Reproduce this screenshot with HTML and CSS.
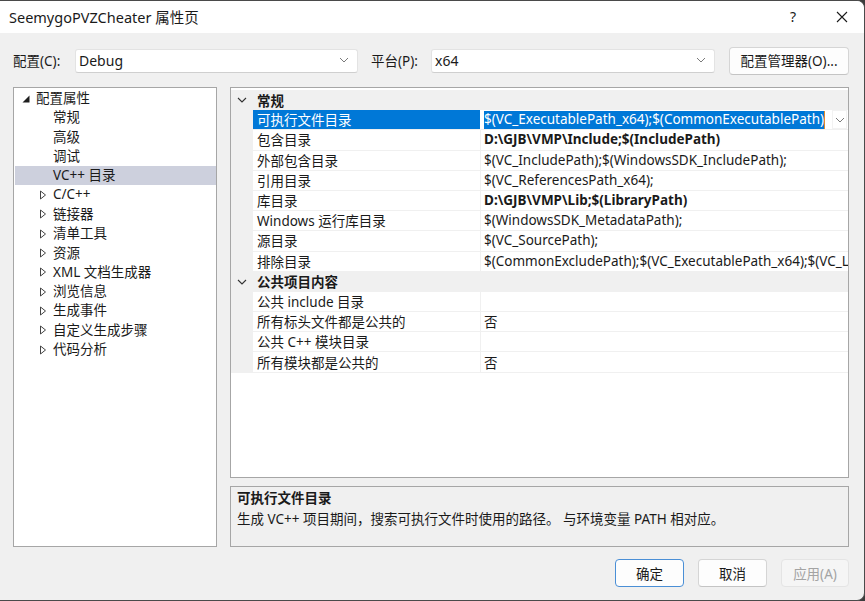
FILE: index.html
```html
<!DOCTYPE html>
<html lang="zh-CN">
<head>
<meta charset="utf-8">
<title>SeemygoPVZCheater 属性页</title>
<link rel="stylesheet" href="styles.css">
</head>
<body>
<div class="window">
  <div class="titlebar">
    <span class="title">SeemygoPVZCheater 属性页</span>
    <span class="help">?</span>
    <span class="close"><svg width="12" height="12" viewBox="0 0 12 12"><path d="M1 1 L11 11 M11 1 L1 11" stroke="#1a1a1a" stroke-width="1.1" fill="none"/></svg></span>
  </div>
  <div class="content">
    <div class="toolbar">
      <span class="lbl lbl-conf">配置(C):</span>
      <div class="combo combo-conf"><span>Debug</span><svg class="chev" width="10" height="6" viewBox="0 0 10 6"><path d="M1 1 L5 5 L9 1" stroke="#7a7a7a" stroke-width="1" fill="none"/></svg></div>
      <span class="lbl lbl-plat">平台(P):</span>
      <div class="combo combo-plat"><span>x64</span><svg class="chev" width="10" height="6" viewBox="0 0 10 6"><path d="M1 1 L5 5 L9 1" stroke="#7a7a7a" stroke-width="1" fill="none"/></svg></div>
      <button class="btn btn-mgr">配置管理器(O)...</button>
    </div>
    <div class="panes">
      <div class="tree">
        <div class="trow root"><svg class="tri" width="8" height="8" viewBox="0 0 8 8"><path d="M7.5 0.5 L7.5 7.5 L0.5 7.5 Z" fill="#1e1e1e"/></svg><span>配置属性</span></div>
        <div class="trow leaf"><span>常规</span></div>
        <div class="trow leaf"><span>高级</span></div>
        <div class="trow leaf"><span>调试</span></div>
        <div class="trow leaf sel"><span>VC++ 目录</span></div>
        <div class="trow node"><svg class="tri" width="8" height="10" viewBox="0 0 8 10"><path d="M1.5 1 L6.5 5 L1.5 9 Z" stroke="#444" stroke-width="1" fill="none"/></svg><span>C/C++</span></div>
        <div class="trow node"><svg class="tri" width="8" height="10" viewBox="0 0 8 10"><path d="M1.5 1 L6.5 5 L1.5 9 Z" stroke="#444" stroke-width="1" fill="none"/></svg><span>链接器</span></div>
        <div class="trow node"><svg class="tri" width="8" height="10" viewBox="0 0 8 10"><path d="M1.5 1 L6.5 5 L1.5 9 Z" stroke="#444" stroke-width="1" fill="none"/></svg><span>清单工具</span></div>
        <div class="trow node"><svg class="tri" width="8" height="10" viewBox="0 0 8 10"><path d="M1.5 1 L6.5 5 L1.5 9 Z" stroke="#444" stroke-width="1" fill="none"/></svg><span>资源</span></div>
        <div class="trow node"><svg class="tri" width="8" height="10" viewBox="0 0 8 10"><path d="M1.5 1 L6.5 5 L1.5 9 Z" stroke="#444" stroke-width="1" fill="none"/></svg><span>XML 文档生成器</span></div>
        <div class="trow node"><svg class="tri" width="8" height="10" viewBox="0 0 8 10"><path d="M1.5 1 L6.5 5 L1.5 9 Z" stroke="#444" stroke-width="1" fill="none"/></svg><span>浏览信息</span></div>
        <div class="trow node"><svg class="tri" width="8" height="10" viewBox="0 0 8 10"><path d="M1.5 1 L6.5 5 L1.5 9 Z" stroke="#444" stroke-width="1" fill="none"/></svg><span>生成事件</span></div>
        <div class="trow node"><svg class="tri" width="8" height="10" viewBox="0 0 8 10"><path d="M1.5 1 L6.5 5 L1.5 9 Z" stroke="#444" stroke-width="1" fill="none"/></svg><span>自定义生成步骤</span></div>
        <div class="trow node"><svg class="tri" width="8" height="10" viewBox="0 0 8 10"><path d="M1.5 1 L6.5 5 L1.5 9 Z" stroke="#444" stroke-width="1" fill="none"/></svg><span>代码分析</span></div>
      </div>
      <div class="right">
        <div class="grid">
          <div class="grow cat"><span class="gut"><svg width="10" height="6" viewBox="0 0 10 6"><path d="M1 1 L5 5 L9 1" stroke="#333" stroke-width="1.1" fill="none"/></svg></span><span class="catname">常规</span></div>
          <div class="grow prop selrow"><span class="gut"></span><span class="name">可执行文件目录</span><span class="val"><span class="hl">$(VC_ExecutablePath_x64);$(CommonExecutablePath)</span><span class="dd"><svg width="10" height="6" viewBox="0 0 10 6"><path d="M1 1 L5 5 L9 1" stroke="#7a7a7a" stroke-width="1" fill="none"/></svg></span></span></div>
          <div class="grow prop"><span class="gut"></span><span class="name">包含目录</span><span class="val b">D:\GJB\VMP\Include;$(IncludePath)</span></div>
          <div class="grow prop"><span class="gut"></span><span class="name">外部包含目录</span><span class="val">$(VC_IncludePath);$(WindowsSDK_IncludePath);</span></div>
          <div class="grow prop"><span class="gut"></span><span class="name">引用目录</span><span class="val">$(VC_ReferencesPath_x64);</span></div>
          <div class="grow prop"><span class="gut"></span><span class="name">库目录</span><span class="val b">D:\GJB\VMP\Lib;$(LibraryPath)</span></div>
          <div class="grow prop"><span class="gut"></span><span class="name">Windows 运行库目录</span><span class="val">$(WindowsSDK_MetadataPath);</span></div>
          <div class="grow prop"><span class="gut"></span><span class="name">源目录</span><span class="val">$(VC_SourcePath);</span></div>
          <div class="grow prop"><span class="gut"></span><span class="name">排除目录</span><span class="val">$(CommonExcludePath);$(VC_ExecutablePath_x64);$(VC_L</span></div>
          <div class="grow cat"><span class="gut"><svg width="10" height="6" viewBox="0 0 10 6"><path d="M1 1 L5 5 L9 1" stroke="#333" stroke-width="1.1" fill="none"/></svg></span><span class="catname">公共项目内容</span></div>
          <div class="grow prop"><span class="gut"></span><span class="name">公共 include 目录</span><span class="val"></span></div>
          <div class="grow prop"><span class="gut"></span><span class="name">所有标头文件都是公共的</span><span class="val">否</span></div>
          <div class="grow prop"><span class="gut"></span><span class="name">公共 C++ 模块目录</span><span class="val"></span></div>
          <div class="grow prop"><span class="gut"></span><span class="name">所有模块都是公共的</span><span class="val">否</span></div>
        </div>
        <div class="desc">
          <div class="desc-title">可执行文件目录</div>
          <div class="desc-text">生成 VC++ 项目期间，搜索可执行文件时使用的路径。 与环境变量 PATH 相对应。</div>
        </div>
      </div>
    </div>
    <div class="buttons">
      <button class="btn btn-ok">确定</button>
      <button class="btn">取消</button>
      <button class="btn btn-dis">应用(A)</button>
    </div>
  </div>
</div>
</body>
</html>
```
FILE: styles.css
```css
* { box-sizing: border-box; }
html, body {
  margin: 0;
  padding: 0;
  width: 865px;
  height: 601px;
  overflow: hidden;
  background: #3b3b3b;
}
.window {
  width: 865px;
  height: 601px;
  background: #f0f0f0;
  border-right: 1px solid #4a4a4a;
  border-bottom: 1px solid #4a4a4a;
  border-top: 1px solid #4a4a4a;
  border-radius: 0 8px 8px 0;
  overflow: hidden;
  font-family: "Noto Sans", "Noto Sans CJK SC", sans-serif;
  font-size: 13.5px;
  color: #1a1a1a;
  display: flex;
  flex-direction: column;
}
.titlebar {
  height: 32px;
  background: #ffffff;
  display: flex;
  align-items: center;
  padding-left: 9px;
  padding-bottom: 1px;
  flex: none;
}
.title {
  font-size: 14.5px;
  flex: 1;
}
.help {
  font-size: 14px;
  width: 20px;
  margin-right: 26px;
}
.close {
  width: 28px;
  display: flex;
  align-items: center;
}
.content {
  padding: 14px 15px 0 13px;
  flex: 1;
  display: flex;
  flex-direction: column;
  min-width: 0;
}
.toolbar {
  display: flex;
  align-items: center;
  height: 27px;
}
.lbl { flex: none; padding-bottom: 1px; }
.lbl-conf { width: 62px; }
.lbl-plat { width: 60px; margin-left: 13px; }
.combo {
  height: 24px;
  background: #ffffff;
  border: 1px solid #e3e3e3;
  border-bottom-color: #cfcfcf;
  border-radius: 3px;
  display: flex;
  align-items: center;
  justify-content: space-between;
  padding: 0 8px 1px 3px;
  font-size: 14px;
}
.combo-conf { width: 283px; }
.combo-plat { width: 284px; }
.btn {
  font-family: inherit;
  font-size: 13.5px;
  color: #1a1a1a;
  background: #fdfdfd;
  border: 1px solid #d5d5d5;
  border-bottom-color: #c4c4c4;
  border-radius: 4px;
  height: 28px;
  width: 69px;
  padding: 0 0 1px 0;
}
.btn-mgr { width: 120px; margin-left: 14px; }
.panes {
  margin-top: 13px;
  height: 460px;
  display: grid;
  grid-template-columns: 204px minmax(0, 1fr);
  column-gap: 13px;
}
.tree {
  background: #ffffff;
  border: 1px solid #a6a6a6;
  padding-top: 1px;
}
.trow {
  height: 19.3px;
  display: flex;
  align-items: center;
  white-space: nowrap;
}
.trow span { padding-bottom: 3px; }
.trow.root { padding-left: 8px; }
.trow.root .tri { margin-right: 6px; }
.trow.leaf { padding-left: 39px; }
.trow.node { padding-left: 25px; }
.trow.node .tri { margin-right: 6px; }
.trow.sel { background: #cdd0dd; margin: 0 0 0 1px; padding-left: 38px; }
.right {
  display: flex;
  flex-direction: column;
  gap: 8px;
  min-width: 0;
}
.grid {
  height: 391px;
  background: #ffffff;
  border: 1px solid #a6a6a6;
  padding-top: 2px;
  overflow: hidden;
}
.grow {
  height: 20.2px;
  display: flex;
  align-items: stretch;
  white-space: nowrap;
}
.gut {
  width: 22px;
  flex: none;
  background: #f0f0f0;
  display: flex;
  align-items: center;
  justify-content: center;
}
.cat { background: #f0f0f0; }
.catname { font-weight: bold; padding: 0 0 1px 4px; display: flex; align-items: center; }
.prop .name {
  width: 228px;
  flex: none;
  padding: 0 0 1px 4px;
  display: flex;
  align-items: center;
  border-right: 1px solid #f0f0f0;
  border-bottom: 1px solid #f0f0f0;
}
.prop .val {
  flex: 1;
  min-width: 0;
  overflow: hidden;
  padding: 0 0 1px 3px;
  display: flex;
  align-items: center;
  border-bottom: 1px solid #f0f0f0;
}
.val.b { font-weight: bold; }
.selrow .name {
  background: #0078d7;
  color: #ffffff;
  border-right-color: #ffffff;
}
.selrow .val { justify-content: space-between; padding: 0 1px 0 3px; }
.hl {
  background: #0078d7;
  color: #ffffff;
  border-right: 1px solid #e08a2a;
  line-height: 17px;
  padding-bottom: 1px;
  white-space: nowrap;
}
.dd {
  width: 15px;
  height: 19px;
  flex: none;
  background: #ffffff;
  display: flex;
  align-items: center;
  justify-content: center;
  border: 1px solid #f2f2f2;
}
.desc {
  flex: 1;
  border: 1px solid #a6a6a6;
  background: #f0f0f0;
  padding: 0 0 0 6px;
}
.desc-title { font-weight: bold; height: 20px; display: flex; align-items: center; }
.desc-text { height: 21px; display: flex; align-items: center; }
.buttons {
  margin-top: 12px;
  display: flex;
  justify-content: flex-end;
  gap: 14px;
}
.btn-ok { border: 1px solid #4a8fd6; }
.btn-dis { color: #a3a3a3; background: #f5f5f5; border-color: #e4e4e4; width: 68px; }
```
